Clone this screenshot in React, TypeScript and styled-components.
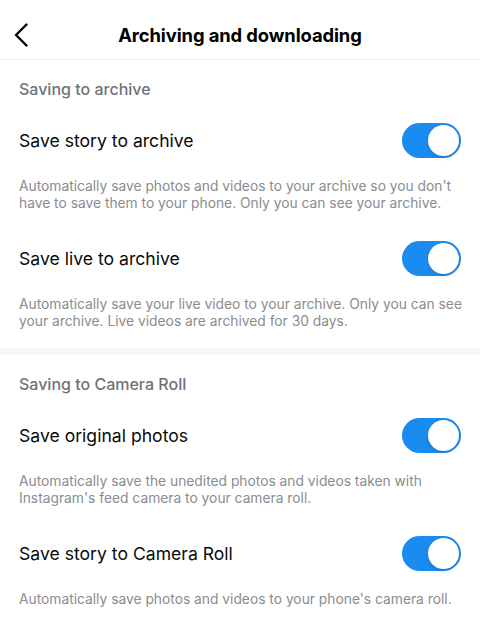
import React from 'react';
import styled, { createGlobalStyle } from 'styled-components';

const GlobalStyle = createGlobalStyle`
  html, body {
    margin: 0;
    padding: 0;
    background: #ffffff;
  }
  body {
    font-family: Inter, "Noto Sans", "Liberation Sans", sans-serif;
    -webkit-font-smoothing: antialiased;
  }
`;

type Setting = {
    title: string;
    description: string;
    on: boolean;
};

const archive: Setting[] = [
    {
        title: 'Save story to archive',
        description:
            "Automatically save photos and videos to your archive so you don't have to save them to your phone. Only you can see your archive.",
        on: true,
    },
    {
        title: 'Save live to archive',
        description:
            'Automatically save your live video to your archive. Only you can see your archive. Live videos are archived for 30 days.',
        on: true,
    },
];

const cameraRoll: Setting[] = [
    {
        title: 'Save original photos',
        description:
            "Automatically save the unedited photos and videos taken with Instagram's feed camera to your camera roll.",
        on: true,
    },
    {
        title: 'Save story to Camera Roll',
        description: "Automatically save photos and videos to your phone's camera roll.",
        on: true,
    },
];

const BackIcon: React.FC = () => (
    <svg width="16" height="24" viewBox="0 0 16 24" fill="none">
        <path d="M13.5 1.5 L3 12 L13.5 22.5" stroke="#000" strokeWidth="2.4" strokeLinecap="round" strokeLinejoin="round" />
    </svg>
);

const Toggle: React.FC<{ on: boolean }> = ({ on }) => (
    <Track $on={on}>
        <Knob $on={on} />
    </Track>
);

const Item: React.FC<{ item: Setting }> = ({ item }) => (
    <ItemBox>
        <Row>
            <ItemTitle>{item.title}</ItemTitle>
            <Toggle on={item.on} />
        </Row>
        <Description>{item.description}</Description>
    </ItemBox>
);

const App: React.FC = () => {
    return (
        <Page>
            <GlobalStyle />
            <Header>
                <Back>
                    <BackIcon />
                </Back>
                <Title>Archiving and downloading</Title>
            </Header>
            <Section>
                <SectionTitle>Saving to archive</SectionTitle>
                {archive.map((item) => (
                    <Item key={item.title} item={item} />
                ))}
            </Section>
            <Divider />
            <Section>
                <SectionTitle>Saving to Camera Roll</SectionTitle>
                {cameraRoll.map((item) => (
                    <Item key={item.title} item={item} />
                ))}
            </Section>
        </Page>
    );
};

const Page = styled.div`
  width: 480px;
  min-height: 626px;
  background: #ffffff;
`;

const Header = styled.div`
  position: relative;
  height: 60px;
  display: flex;
  align-items: center;
  justify-content: center;
  border-bottom: 1px solid #ececec;
  box-sizing: border-box;
`;

const Back = styled.div`
  position: absolute;
  left: 13px;
  top: 23px;
  display: flex;
`;

const Title = styled.div`
  font-size: 18.4px;
  font-weight: 700;
  color: #000;
  letter-spacing: -0.1px;
  margin-top: 10px;
`;

const Section = styled.div`
  padding: 0 19px 18px;
`;

const SectionTitle = styled.div`
  font-size: 16px;
  font-weight: 500;
  color: #6f7378;
  line-height: 20px;
  padding-top: 19px;
  margin-bottom: 24px;
`;

const ItemBox = styled.div`
  & + & {
    margin-top: 29px;
  }
`;

const Row = styled.div`
  display: flex;
  align-items: center;
  justify-content: space-between;
  height: 35px;
`;

const ItemTitle = styled.div`
  font-size: 17.6px;
  color: #0a0a0a;
`;

const Description = styled.div`
  margin-top: 20px;
  margin-right: -12px;
  font-size: 13.8px;
  line-height: 17px;
  color: #8a8c90;
`;

const Track = styled.div<{ $on: boolean }>`
  width: 59px;
  height: 35px;
  border-radius: 18px;
  background: ${(p) => (p.$on ? '#1a8cf0' : '#e5e5ea')};
  position: relative;
  flex-shrink: 0;
`;

const Knob = styled.div<{ $on: boolean }>`
  position: absolute;
  top: 2px;
  left: ${(p) => (p.$on ? '26px' : '2px')};
  width: 31px;
  height: 31px;
  border-radius: 50%;
  background: #ffffff;
  box-shadow: 0 0 0 0.5px rgba(0, 0, 0, 0.06), 0 2px 4px rgba(0, 0, 0, 0.12);
`;

const Divider = styled.div`
  height: 7px;
  background: #f6f6f7;
`;

export default App;
